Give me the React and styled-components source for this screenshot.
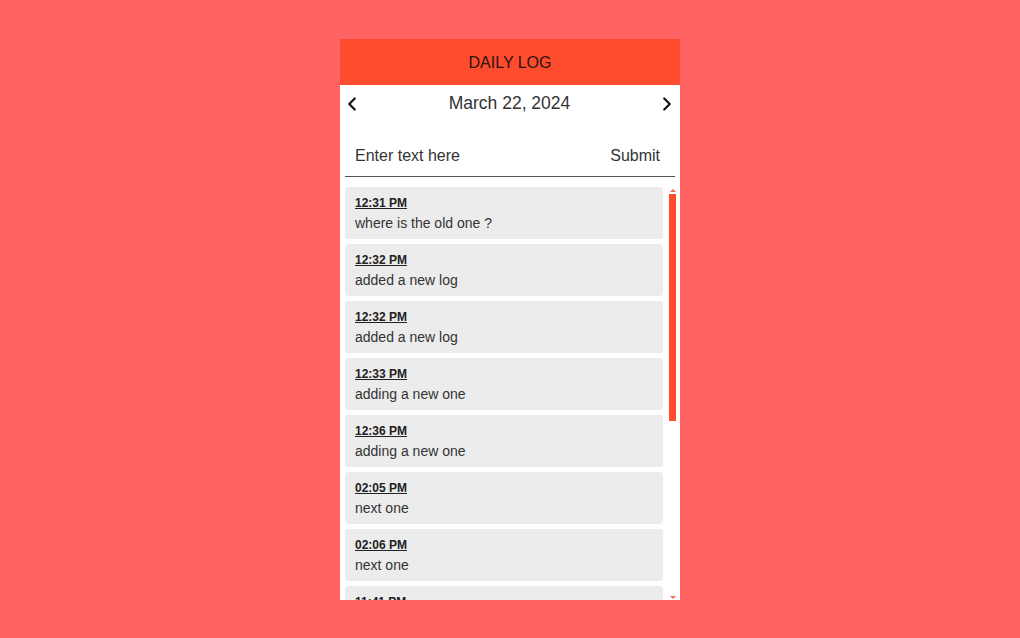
import styled, { createGlobalStyle } from "styled-components";
import { ChevronLeft, ChevronRight } from "lucide-react";

const GlobalStyle = createGlobalStyle`
  html, body {
    margin: 0;
    padding: 0;
    background: #ff6363;
    font-family: "Liberation Sans", Arial, sans-serif;
  }
`;

const Page = styled.div`
  height: 638px;
  display: flex;
  justify-content: center;
  padding-top: 39px;
  box-sizing: border-box;
`;

const Card = styled.div`
  width: 340px;
  height: 561px;
  background: #fff;
  display: flex;
  flex-direction: column;
  overflow: hidden;
`;

const Header = styled.div`
  height: 46px;
  background: #ff4b2e;
  display: flex;
  align-items: center;
  justify-content: center;
  padding-top: 2px;
  box-sizing: border-box;
  font-size: 16px;
  color: #2a1410;
  flex-shrink: 0;
`;

const DateRow = styled.div`
  display: flex;
  align-items: center;
  justify-content: space-between;
  padding: 0 2px 0 1px;
  height: 37px;
  font-size: 17.5px;
  color: #333;
  flex-shrink: 0;

  svg {
    color: #111;
  }
`;

const InputRow = styled.form`
  display: flex;
  align-items: center;
  margin: 14px 5px 0;
  height: 40px;
  border-bottom: 1px solid #555;
  flex-shrink: 0;

  input {
    flex: 1;
    border: none;
    outline: none;
    font: inherit;
    font-size: 16px;
    padding: 0 10px;
    color: #333;
    background: transparent;
  }
  input::placeholder {
    color: #333;
  }

  button {
    border: none;
    background: transparent;
    font: inherit;
    font-size: 16px;
    color: #333;
    padding: 0 15px 0 0;
    cursor: pointer;
  }
`;

const ListArea = styled.div`
  flex: 1;
  min-height: 0;
  display: flex;
  margin-top: 10px;
`;

const List = styled.div`
  flex: 1;
  overflow-y: auto;
  scrollbar-width: none;
  padding-left: 5px;
  display: flex;
  flex-direction: column;
  gap: 5px;

  &::-webkit-scrollbar {
    display: none;
  }
`;

const ScrollBar = styled.div`
  width: 12px;
  padding: 0 4px 0 1px;
  box-sizing: border-box;
  display: flex;
  flex-direction: column;
  align-items: center;
`;

const Arrow = styled.div`
  width: 0;
  height: 0;
  margin: 2px 0 1px;
  border-left: 3px solid transparent;
  border-right: 3px solid transparent;
  border-${(p) => (p.$down ? "top" : "bottom")}: 3px solid #ff6a55;
`;

const Track = styled.div`
  flex: 1;
  width: 100%;
  padding-top: 1px;
`;

const Thumb = styled.div`
  width: 100%;
  background: #ff4b2e;
`;

const Item = styled.div`
  background: #ececec;
  border-radius: 4px;
  padding: 9px 10px 6px;
  margin-right: 5px;
  flex-shrink: 0;
  height: 52px;
  box-sizing: border-box;

  h5 {
    margin: 0 0 5px;
    font-size: 12px;
    font-weight: bold;
    text-decoration: underline;
    color: #222;
  }

  p {
    margin: 0;
    font-size: 14px;
    color: #333;
  }
`;

const logs = [
  { time: "12:31 PM", text: "where is the old one ?" },
  { time: "12:32 PM", text: "added a new log" },
  { time: "12:32 PM", text: "added a new log" },
  { time: "12:33 PM", text: "adding a new one" },
  { time: "12:36 PM", text: "adding a new one" },
  { time: "02:05 PM", text: "next one" },
  { time: "02:06 PM", text: "next one" },
  { time: "11:41 PM", text: "late entry" },
  { time: "11:42 PM", text: "another one" },
  { time: "11:44 PM", text: "testing" },
  { time: "11:45 PM", text: "testing again" },
  { time: "11:50 PM", text: "last one" },
];

export default function App() {
  return (
    <>
      <GlobalStyle />
      <Page>
        <Card>
          <Header>DAILY LOG</Header>
          <DateRow>
            <ChevronLeft size={22} strokeWidth={2.4} />
            <span>March 22, 2024</span>
            <ChevronRight size={22} strokeWidth={2.4} />
          </DateRow>
          <InputRow onSubmit={(e) => e.preventDefault()}>
            <input placeholder="Enter text here" />
            <button type="submit">Submit</button>
          </InputRow>
          <ListArea>
            <List>
              {logs.map((log, i) => (
                <Item key={i}>
                  <h5>{log.time}</h5>
                  <p>{log.text}</p>
                </Item>
              ))}
            </List>
            <ScrollBar>
              <Arrow />
              <Track>
                <Thumb style={{ height: 227 }} />
              </Track>
              <Arrow $down />
            </ScrollBar>
          </ListArea>
        </Card>
      </Page>
    </>
  );
}
